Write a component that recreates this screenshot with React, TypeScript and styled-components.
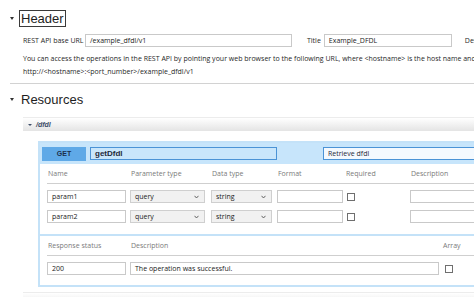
import styled, { createGlobalStyle } from 'styled-components';

const GlobalStyle = createGlobalStyle`
  html, body {
    margin: 0;
    padding: 0;
    background: #fff;
    overflow: hidden;
  }
  body {
    width: 474px;
    height: 297px;
    font-family: 'Open Sans', 'Noto Sans', sans-serif;
    font-size: 7px;
    color: #222;
  }
`;

const Page = styled.div`
  width: 600px;
  padding: 10px 0 0 10px;
`;

const SectionTitle = styled.div<{ $focused?: boolean }>`
  display: flex;
  align-items: center;
  gap: 5px;
  height: 17px;
  font-family: 'Liberation Sans', Arial, sans-serif;
  font-size: 13px;
  color: #1e1e1e;

  span {
    box-sizing: border-box;
    height: 17px;
    line-height: 15px;
    padding: 0 1px;
    border: 1px solid ${({ $focused }) => ($focused ? '#3a3a3a' : 'transparent')};
  }
`;

const Caret = styled.i<{ $size?: number; $color?: string }>`
  display: block;
  width: 0;
  height: 0;
  border-left: ${({ $size = 2.5 }) => $size}px solid transparent;
  border-right: ${({ $size = 2.5 }) => $size}px solid transparent;
  border-top: ${({ $size = 2.5 }) => $size * 1.2}px solid ${({ $color = '#333' }) => $color};
`;

const FieldRow = styled.div`
  display: flex;
  align-items: center;
  margin-top: 7px;
  padding-left: 13px;
  white-space: nowrap;
`;

const Label = styled.label<{ $width?: number; $gap?: number }>`
  width: ${({ $width }) => ($width ? `${$width}px` : 'auto')};
  margin-right: ${({ $gap = 0 }) => $gap}px;
  color: #1f1f1f;
`;

const TextBox = styled.div<{ $width: number; $gap?: number }>`
  box-sizing: border-box;
  width: ${({ $width }) => $width}px;
  height: 13px;
  margin-right: ${({ $gap = 0 }) => $gap}px;
  padding-left: 4px;
  border: 1px solid #c9c9c9;
  background: #fff;
  line-height: 11px;
  color: #1a1a1a;
  overflow: hidden;
  white-space: nowrap;
`;

const SelectBox = styled(TextBox)`
  display: flex;
  justify-content: space-between;
  align-items: center;
  padding-right: 5px;
  background: #f1f1f1;
  border-color: #cfcfcf;
`;

const Info = styled.p`
  margin: 5px 0 0;
  padding-left: 13px;
  line-height: 13px;
  white-space: nowrap;
  color: #1f1f1f;
`;

const Divider = styled.hr`
  margin: 5px 0 7px;
  border: none;
  border-top: 1px solid #d2d2d2;
`;

const ResourceBar = styled.div<{ $top?: number }>`
  display: flex;
  align-items: center;
  gap: 4px;
  box-sizing: border-box;
  height: 14px;
  margin: ${({ $top = 9 }) => $top}px 0 0 13px;
  padding-left: 5px;
  border-top: 1px solid #ececec;
  background: linear-gradient(#ffffff, #e4e4e4);
  font-family: 'Liberation Sans', Arial, sans-serif;
  font-size: 7px;
  font-style: italic;
  font-weight: bold;
  color: #3f4f6a;
`;

const MethodPanel = styled.section`
  margin: 10px 0 0 28px;
  border: 2px solid #c4e2f8;
  border-right: none;
  background: #fff;
`;

const MethodHeader = styled.div`
  display: flex;
  align-items: center;
  height: 21px;
  padding-left: 2px;
  background: #c7e5fb;
`;

const VerbButton = styled.div`
  width: 44px;
  height: 14px;
  margin-right: 4px;
  background: #5fa9e7;
  font-family: 'Liberation Sans', Arial, sans-serif;
  font-size: 7px;
  font-weight: bold;
  line-height: 14px;
  text-align: center;
  color: #1c2e4a;
`;

const BlueBox = styled(TextBox)<{ $strong?: boolean }>`
  border-color: #4b93d6;
  background: ${({ $strong }) => ($strong ? '#c9e6fb' : '#f4f9fe')};
  font-family: ${({ $strong }) =>
    $strong ? "'Liberation Sans', Arial, sans-serif" : "'Open Sans', sans-serif"};
  font-size: ${({ $strong }) => ($strong ? 8 : 7)}px;
  font-weight: ${({ $strong }) => ($strong ? 'bold' : 'normal')};
  color: #1f2a3a;
`;

const Table = styled.div<{ $columns: string; $bottom: number }>`
  display: grid;
  grid-template-columns: ${({ $columns }) => $columns};
  align-items: center;
  padding: 0 0 ${({ $bottom }) => $bottom}px 7px;
`;

const HeadCell = styled.div<{ $height: number }>`
  display: flex;
  align-items: center;
  height: ${({ $height }) => $height}px;
  padding-left: 1px;
  border-bottom: 1px solid #cfcfcf;
  margin-bottom: 6px;
  color: #7a7a7a;
`;

const Cell = styled.div`
  display: flex;
  align-items: center;
  height: 13px;
  margin-bottom: 7px;
`;

const Check = styled.span<{ $left?: number }>`
  box-sizing: border-box;
  width: 8px;
  height: 8px;
  margin-left: ${({ $left = 2 }) => $left}px;
  border: 1px solid #6f6f6f;
  background: #fff;
`;

const Separator = styled.div`
  height: 2px;
  background: #c4e2f8;
`;

const Chevron = () => (
  <svg width="5" height="4" viewBox="0 0 5 4">
    <path d="M0.5 0.8 L2.5 3 L4.5 0.8" fill="none" stroke="#555" strokeWidth="0.9" />
  </svg>
);

const params = [
  { name: 'param1', kind: 'query', type: 'string' },
  { name: 'param2', kind: 'query', type: 'string' },
];

const paramColumns = ['Name', 'Parameter type', 'Data type', 'Format', 'Required', 'Description'];

export default function App() {
  return (
    <>
      <GlobalStyle />
      <Page>
        <SectionTitle $focused>
          <Caret />
          <span>Header</span>
        </SectionTitle>

        <FieldRow>
          <Label $width={62}>REST API base URL</Label>
          <TextBox $width={207} $gap={15}>/example_dfdl/v1</TextBox>
          <Label $gap={3}>Title</Label>
          <TextBox $width={128} $gap={13}>Example_DFDL</TextBox>
          <Label>Description</Label>
        </FieldRow>

        <Info>
          You can access the operations in the REST API by pointing your web browser to the following URL, where
          &lt;hostname&gt; is the host name and &lt;port_number&gt; is the port number
          <br />
          http://&lt;hostname&gt;:&lt;port_number&gt;/example_dfdl/v1
        </Info>

        <Divider />

        <SectionTitle>
          <Caret />
          <span>Resources</span>
        </SectionTitle>

        <ResourceBar>
          <Caret $size={2} $color="#3f4f6a" />
          /dfdl
        </ResourceBar>

        <MethodPanel>
          <MethodHeader>
            <VerbButton>GET</VerbButton>
            <BlueBox $width={187} $gap={46} $strong>
              getDfdl
            </BlueBox>
            <BlueBox $width={200}>Retrieve dfdl</BlueBox>
          </MethodHeader>

          <Table $columns="83px 81px 66px 68px 65px 120px" $bottom={4}>
            {paramColumns.map((c) => (
              <HeadCell key={c} $height={19}>
                {c}
              </HeadCell>
            ))}
            {params.flatMap((p) => [
              <Cell key={`${p.name}-n`}>
                <TextBox $width={79}>{p.name}</TextBox>
              </Cell>,
              <Cell key={`${p.name}-k`}>
                <SelectBox $width={75}>
                  {p.kind}
                  <Chevron />
                </SelectBox>
              </Cell>,
              <Cell key={`${p.name}-t`}>
                <SelectBox $width={61}>
                  {p.type}
                  <Chevron />
                </SelectBox>
              </Cell>,
              <Cell key={`${p.name}-f`}>
                <TextBox $width={66} />
              </Cell>,
              <Cell key={`${p.name}-r`}>
                <Check />
              </Cell>,
              <Cell key={`${p.name}-d`}>
                <TextBox $width={110} />
              </Cell>,
            ])}
          </Table>

          <Separator />

          <Table $columns="83px 312px 40px" $bottom={3}>
            <HeadCell $height={19}>Response status</HeadCell>
            <HeadCell $height={19}>Description</HeadCell>
            <HeadCell $height={19}>Array</HeadCell>
            <Cell>
              <TextBox $width={79}>200</TextBox>
            </Cell>
            <Cell>
              <TextBox $width={309}>The operation was successful.</TextBox>
            </Cell>
            <Cell>
              <Check $left={3} />
            </Cell>
          </Table>
        </MethodPanel>

        <ResourceBar $top={5} />
      </Page>
    </>
  );
}
